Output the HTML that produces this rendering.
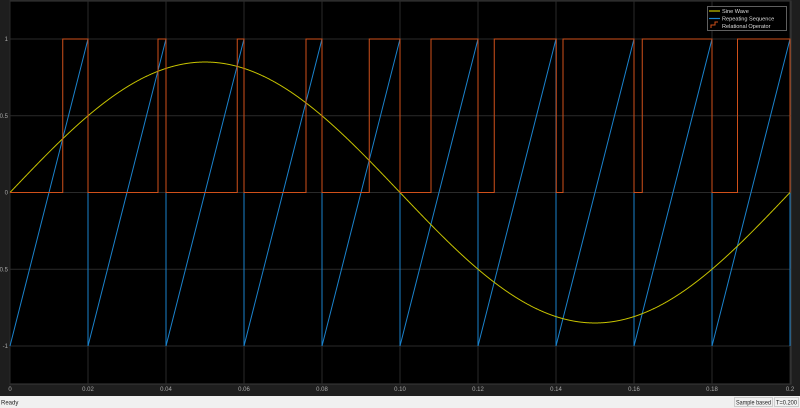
<!DOCTYPE html>
<html><head><style>
body{margin:0;width:800px;height:408px;background:#1c1c1c;overflow:hidden;font-family:"Liberation Sans",sans-serif;}
</style></head><body>
<svg id="s" width="800" height="408" style="position:absolute;left:0;top:0">
<rect x="0" y="0" width="800" height="396" fill="#1e1e1e"/>
<rect x="10" y="1" width="781" height="383" fill="#000" stroke="#3a3a3a" stroke-width="1"/>
<g id="grid" stroke="#2a2a2a" stroke-width="1"></g>
<g id="lab" fill="#a8a8a8" font-size="6" font-family="Liberation Sans"></g>
<path id="saw" fill="none" stroke="#1a82cc" stroke-width="1"/>
<path id="sin" fill="none" stroke="#c8c400" stroke-width="1"/>
<path id="rel" fill="none" stroke="#d0501a" stroke-width="1"/>
<rect x="707.5" y="6.5" width="79" height="24" fill="#000" stroke="#777" stroke-width="0.8"/>
<line x1="709" y1="11" x2="720" y2="11" stroke="#c8c400" stroke-width="1.2"/>
<line x1="709" y1="18.5" x2="720" y2="18.5" stroke="#1a82cc" stroke-width="1.2"/>
<path d="M711 28V25H715V22H718" fill="none" stroke="#d0501a" stroke-width="1"/>
<g fill="#ddd" font-size="5.6" font-family="Liberation Sans">
<text x="722" y="13">Sine Wave</text>
<text x="722" y="20.5">Repeating Sequence</text>
<text x="722" y="28">Relational Operator</text></g>
<rect x="0" y="396" width="800" height="12" fill="#f0f0f0"/>
<rect x="734.5" y="397.5" width="38" height="9" fill="none" stroke="#ccc"/>
<rect x="774.5" y="397.5" width="24" height="9" fill="none" stroke="#ccc"/>
<g fill="#222" font-size="6" font-family="Liberation Sans">
<text x="1" y="404.5">Ready</text>
<text x="736" y="404.5" textLength="35" lengthAdjust="spacingAndGlyphs">Sample based</text>
<text x="776" y="404.5" textLength="21" lengthAdjust="spacingAndGlyphs">T=0.200</text></g>
</svg>
<script>
var Y=v=>192.5-v*153.5;
var g=document.getElementById('grid'),l=document.getElementById('lab'),h='',lh='';
for(var i=0;i<=10;i++){var x=10+i*78;h+='<line x1="'+x+'" y1="1" x2="'+x+'" y2="384"/>';
lh+='<text x="'+x+'" y="391" text-anchor="middle">'+(i==0?'0':i==10?'0.2':(i*0.02).toFixed(2))+'</text>';}
[1,0.5,0,-0.5,-1].forEach(v=>{var y=Y(v);h+='<line x1="10" y1="'+y+'" x2="791" y2="'+y+'"/>';lh+='<text x="8" y="'+(y+2)+'" text-anchor="end">'+v+'</text>';});
g.innerHTML=h;l.innerHTML=lh;
var sw='';for(var k=0;k<10;k++){var x0=10+k*78;sw+='M'+x0+' '+Y(-1)+'L'+(x0+78)+' '+Y(1)+'L'+(x0+78)+' '+Y(-1);}
document.getElementById('saw').setAttribute('d',sw);
var sn='',rl='',prev=null;
for(var p=0;p<=780;p+=0.25){var t=p/780*0.2;var s=0.85*Math.sin(2*Math.PI*5*t);
var ph=(t/0.02)%1;var saw=-1+2*ph;
sn+=(p==0?'M':'L')+(10+p)+' '+Y(s).toFixed(2);
var r=saw>s?1:0;if(p==0){rl='M10 '+Y(r);}else if(r!==prev){rl+='L'+(10+p)+' '+Y(prev)+'L'+(10+p)+' '+Y(r);}prev=r;}
rl+='L790 '+Y(prev);
document.getElementById('sin').setAttribute('d',sn);
document.getElementById('rel').setAttribute('d',rl);
</script>
</body></html>
